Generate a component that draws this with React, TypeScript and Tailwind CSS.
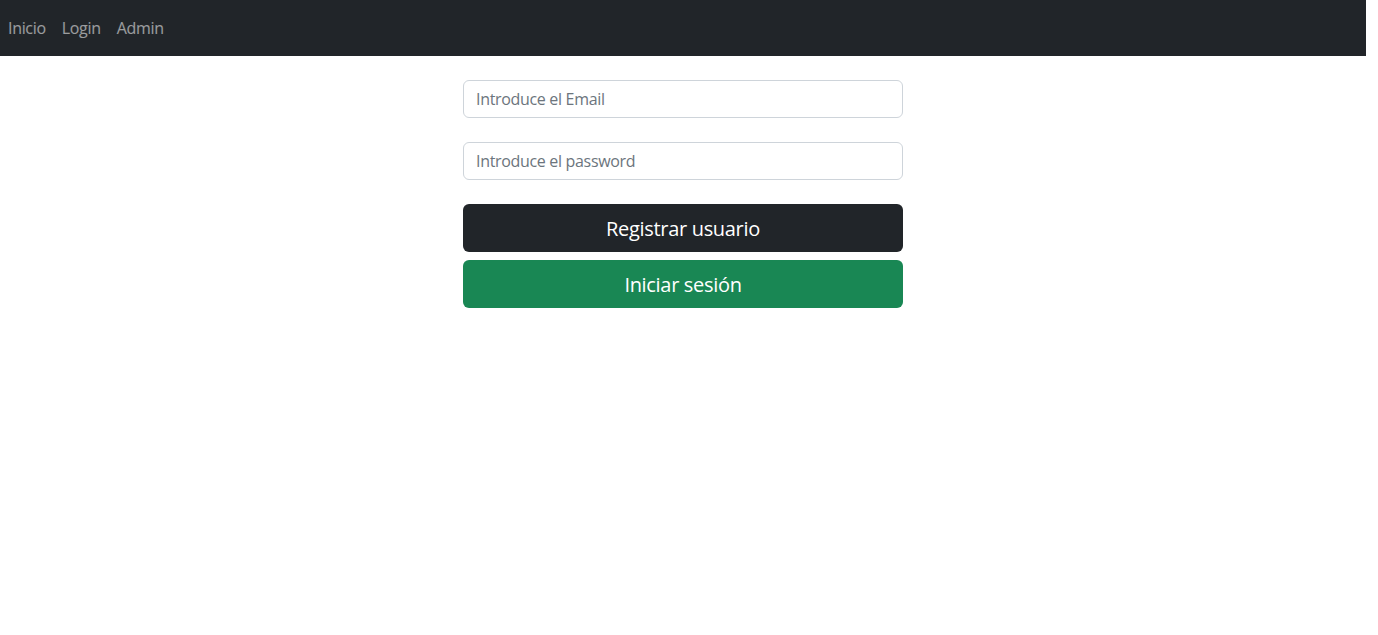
import React from 'react';

const NAV_LINKS = ['Inicio', 'Login', 'Admin'];

export default function App() {
  return (
    <div className="w-[1366px] min-h-[635px] bg-white font-['Open_Sans','Noto_Sans',sans-serif] tracking-[-0.02em]">
      {/* Navbar */}
      <nav className="h-[56px] bg-[#212529] flex items-center">
        <ul className="flex items-center">
          {NAV_LINKS.map(link => (
            <li key={link}>
              <a href="#" className="block px-2 py-2 text-[16px] leading-6 text-white/55 hover:text-white/75">
                {link}
              </a>
            </li>
          ))}
        </ul>
      </nav>

      {/* Form */}
      <div className="w-[440px] mx-auto pt-6 flex flex-col">
        <input
          type="email"
          placeholder="Introduce el Email"
          className="h-[38px] w-full px-3 text-[16px] tracking-[-0.02em] text-[#212529] placeholder:text-[#6c757d] border border-[#ced4da] rounded-[6px] outline-none"
        />
        <input
          type="password"
          placeholder="Introduce el password"
          className="mt-6 h-[38px] w-full px-3 text-[16px] tracking-[-0.02em] text-[#212529] placeholder:text-[#6c757d] border border-[#ced4da] rounded-[6px] outline-none"
        />
        <button className="mt-6 h-[48px] w-full rounded-[6px] bg-[#212529] text-white text-[20px] leading-[30px] pt-[1px]">
          Registrar usuario
        </button>
        <button className="mt-2 h-[48px] w-full rounded-[6px] bg-[#198754] text-white text-[20px] leading-[30px] pt-[1px]">
          Iniciar sesión
        </button>
      </div>
    </div>
  );
}
